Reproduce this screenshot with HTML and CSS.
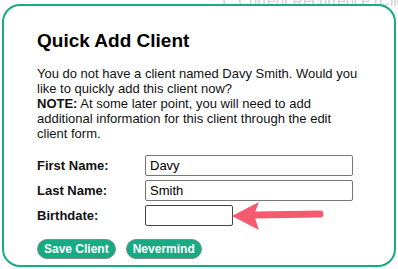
FILE: index.html
```html
<!DOCTYPE html>
<html>
<head>
<meta charset="utf-8">
<link rel="stylesheet" href="styles.css">
</head>
<body>
<div class="page">
  <div class="bg-text"><span class="bg-bar">I</span>Current Recurrence (Click</div>
  <div class="dialog">
    <h2 class="title">Quick Add Client</h2>
    <p class="msg">You do not have a client named Davy Smith. Would you like to quickly add this client now?<br><b>NOTE:</b> At some later point, you will need to add additional information for this client through the edit client form.</p>
    <div class="form">
      <label class="lbl">First Name:</label>
      <input class="inp" type="text" value="Davy">
      <label class="lbl">Last Name:</label>
      <input class="inp" type="text" value="Smith">
      <label class="lbl">Birthdate:</label>
      <input class="inp inp-date" type="text" value="">
    </div>
    <div class="actions">
      <button class="btn">Save Client</button>
      <button class="btn">Nevermind</button>
    </div>
  </div>
  <svg class="arrow" width="94" height="30" viewBox="0 0 94 30">
    <line x1="22" y1="14" x2="88" y2="13" stroke="#f45b70" stroke-width="7" stroke-linecap="round"/>
    <polygon points="0,15 27,1 22,14 27,29" fill="#f45b70"/>
  </svg>
</div>
</body>
</html>
```
FILE: styles.css
```css
html, body {
  margin: 0;
  padding: 0;
  background: #ffffff;
}
.page {
  position: relative;
  width: 398px;
  height: 269px;
  overflow: hidden;
  font-family: "Liberation Sans", Arial, sans-serif;
  color: #111;
}
.bg-text {
  position: absolute;
  left: 222px;
  top: -8px;
  font-size: 15px;
  color: #cfcfcf;
  white-space: nowrap;
}
.bg-bar {
  margin-right: 12px;
}
.dialog {
  position: absolute;
  left: 2px;
  top: 4px;
  width: 394px;
  height: 263px;
  box-sizing: border-box;
  border: 2px solid #17ab84;
  border-radius: 18px;
  background: #fff;
  padding: 23px 33px 0 33px;
}
.title {
  margin: 0;
  font-size: 19px;
  line-height: 24px;
  font-weight: bold;
  color: #000;
}
.msg {
  margin: 13px 0 0 0;
  font-size: 13px;
  line-height: 15px;
}
.form {
  margin-top: 14px;
  display: grid;
  grid-template-columns: 108px auto;
  row-gap: 4px;
  align-items: center;
}
.lbl {
  font-size: 13px;
  font-weight: bold;
}
.inp {
  box-sizing: border-box;
  width: 208px;
  height: 21px;
  margin: 0;
  border: 1px solid #767676;
  border-radius: 2px;
  padding: 0 4px;
  font-family: "Liberation Sans", Arial, sans-serif;
  font-size: 13px;
  color: #000;
  background: #fff;
}
.inp-date {
  width: 88px;
  border-color: #444;
}
.actions {
  margin-top: 13px;
  display: flex;
  gap: 10px;
}
.btn {
  margin: 0;
  height: 20px;
  padding: 0 6px;
  border: 1px solid #7d8f88;
  border-radius: 10px;
  background: #17ab84;
  color: #fff;
  font-family: "Liberation Sans", Arial, sans-serif;
  font-size: 12px;
  font-weight: bold;
  line-height: 18px;
}
.arrow {
  position: absolute;
  left: 232px;
  top: 201px;
}
```
